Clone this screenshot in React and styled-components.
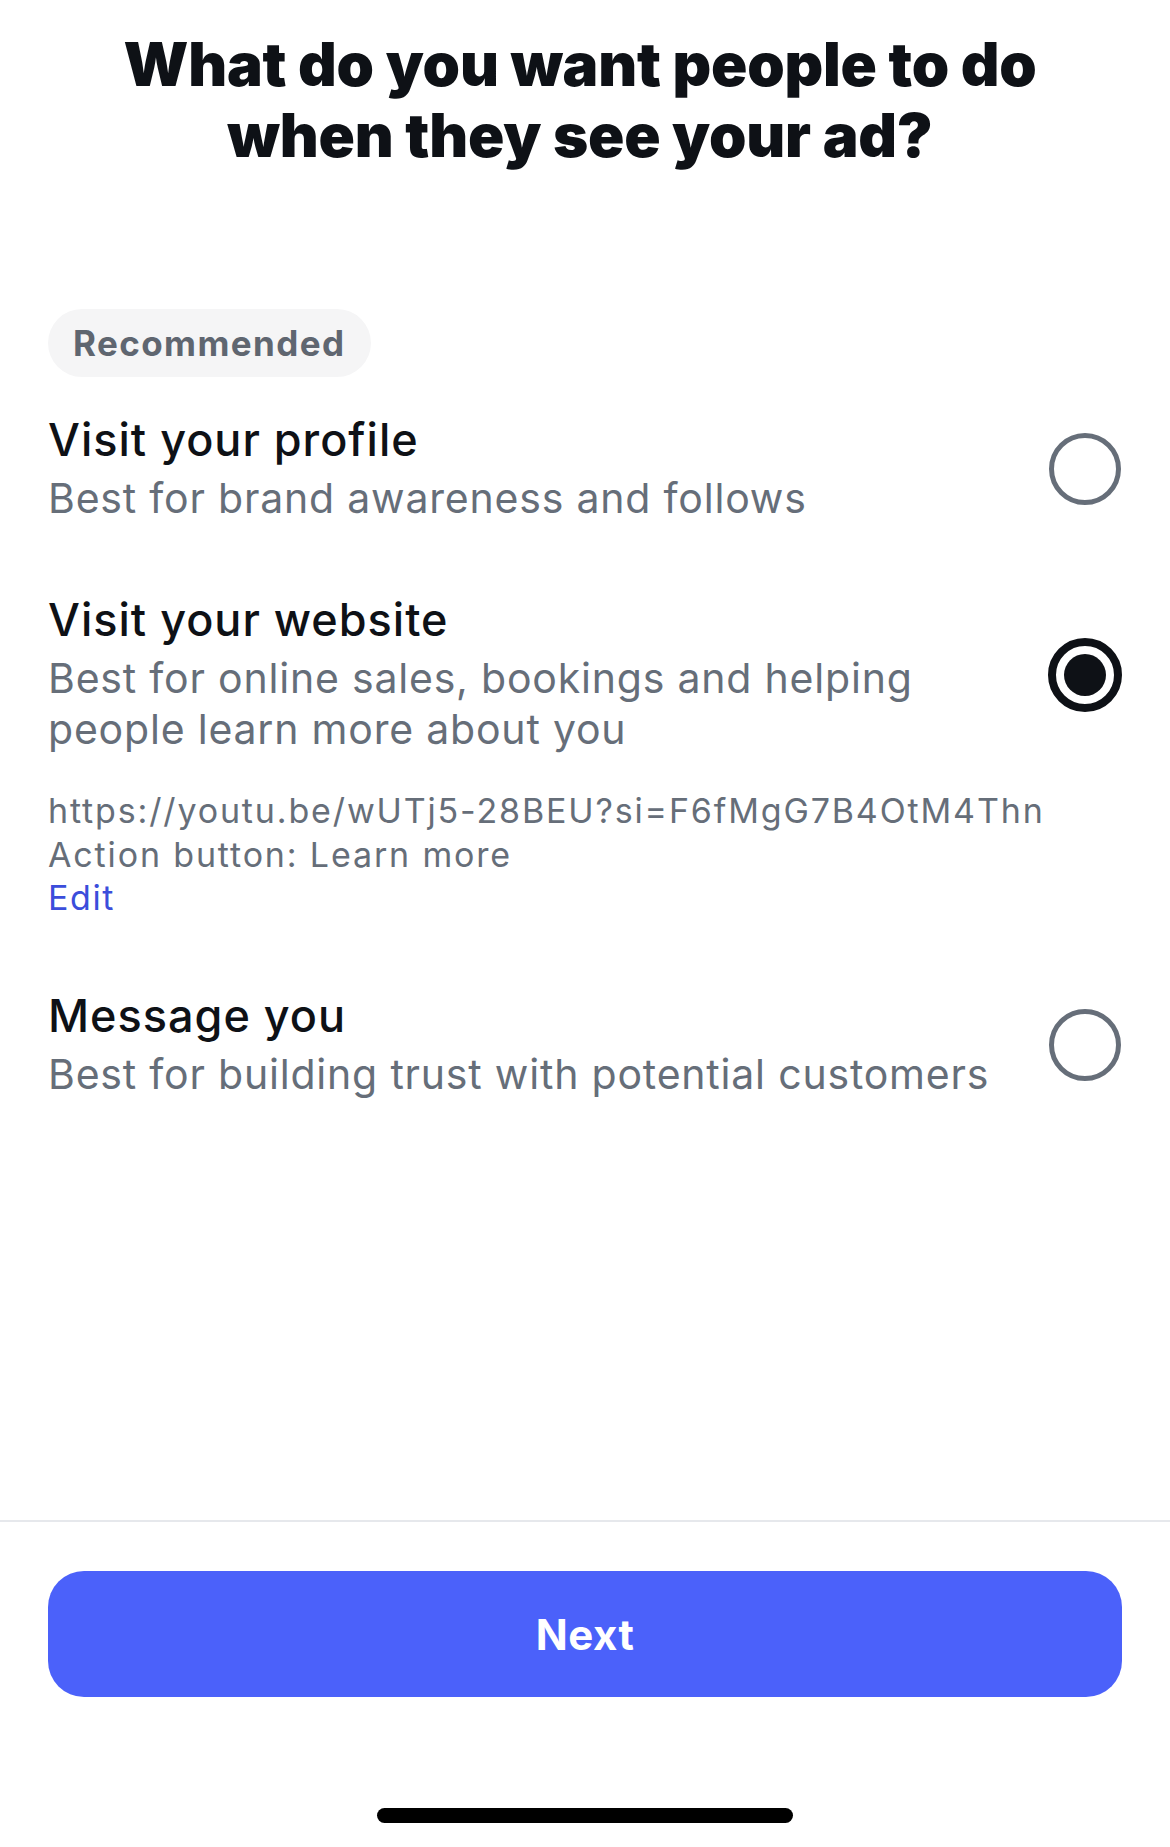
import React, { useState } from "react";
import styled, { createGlobalStyle } from "styled-components";

const GlobalStyle = createGlobalStyle`
  html, body {
    margin: 0;
    padding: 0;
    background: #ffffff;
  }
  body {
    font-family: Inter, "Noto Sans", "Liberation Sans", sans-serif;
    -webkit-font-smoothing: antialiased;
  }
`;

const options = [
  {
    id: "profile",
    title: "Visit your profile",
    desc: "Best for brand awareness and follows",
  },
  {
    id: "website",
    title: "Visit your website",
    desc: "Best for online sales, bookings and helping people learn more about you",
    details: {
      url: "https://youtu.be/wUTj5-28BEU?si=F6fMgG7B4OtM4Thn",
      action: "Action button: Learn more",
    },
  },
  {
    id: "message",
    title: "Message you",
    desc: "Best for building trust with potential customers",
  },
];

const App = () => {
  const [selected, setSelected] = useState("website");

  return (
    <Page>
      <GlobalStyle />
      <Heading>
        What do you want people to do
        <br />
        when they see your ad?
      </Heading>

      <Content>
        <Pill>Recommended</Pill>
        {options.map((opt) => (
          <Option key={opt.id}>
            <OptionRow onClick={() => setSelected(opt.id)}>
              <OptionText>
                <OptionTitle>{opt.title}</OptionTitle>
                <OptionDesc>{opt.desc}</OptionDesc>
              </OptionText>
              <Radio $checked={selected === opt.id} />
            </OptionRow>
            {opt.details && (
              <Details>
                <DetailLine>{opt.details.url}</DetailLine>
                <DetailLine>{opt.details.action}</DetailLine>
                <EditLink>Edit</EditLink>
              </Details>
            )}
          </Option>
        ))}
      </Content>

      <Footer>
        <NextButton>Next</NextButton>
        <HomeBar />
      </Footer>
    </Page>
  );
};

export default App;

const Page = styled.div`
  width: 1170px;
  height: 1847px;
  display: flex;
  flex-direction: column;
  background: #fff;
  overflow: hidden;
`;

const Heading = styled.h1`
  margin: 0;
  padding: 29px 10px 0 0;
  font-size: 60px;
  line-height: 71px;
  font-weight: 900;
  letter-spacing: -0.2px;
  color: #0e1116;
  text-align: center;
`;

const Content = styled.div`
  flex: 1;
  display: flex;
  flex-direction: column;
  align-items: flex-start;
  padding: 0 48px;
  margin-top: 138px;
`;

const Pill = styled.div`
  height: 68px;
  display: flex;
  align-items: center;
  padding: 0 26px 0 25px;
  border-radius: 34px;
  background: #f5f5f6;
  color: #5f6670;
  font-size: 35px;
  font-weight: 700;
  letter-spacing: 1.4px;
`;

const Option = styled.div`
  width: 100%;
  margin-top: 37px;
  & + & {
    margin-top: 70px;
  }
`;

const OptionRow = styled.div`
  display: flex;
  align-items: center;
  justify-content: space-between;
  cursor: pointer;
`;

const OptionText = styled.div`
  display: flex;
  flex-direction: column;
  gap: 7px;
  max-width: 980px;
`;

const OptionTitle = styled.div`
  font-size: 45px;
  line-height: 52px;
  font-weight: 500;
  color: #0e1116;
  letter-spacing: 1px;
`;

const OptionDesc = styled.div`
  font-size: 41px;
  line-height: 51px;
  color: #666e79;
  letter-spacing: 0.8px;
`;

const Radio = styled.div`
  flex-shrink: 0;
  box-sizing: border-box;
  width: ${(p) => (p.$checked ? "74px" : "72px")};
  height: ${(p) => (p.$checked ? "74px" : "72px")};
  border-radius: 50%;
  border: ${(p) => (p.$checked ? "8px solid #0e1116" : "5px solid #666e79")};
  margin-right: ${(p) => (p.$checked ? "0" : "1px")};
  display: flex;
  align-items: center;
  justify-content: center;

  &::after {
    content: "";
    display: ${(p) => (p.$checked ? "block" : "none")};
    width: 42px;
    height: 42px;
    border-radius: 50%;
    background: #0e1116;
  }
`;

const Details = styled.div`
  margin-top: 34px;
  display: flex;
  flex-direction: column;
`;

const DetailLine = styled.div`
  font-size: 34px;
  line-height: 43.5px;
  color: #666e79;
  letter-spacing: 1.85px;
`;

const EditLink = styled.a`
  font-size: 34px;
  line-height: 43.5px;
  color: #3b4ddb;
  letter-spacing: 1.6px;
  cursor: pointer;
  align-self: flex-start;
`;

const Footer = styled.div`
  border-top: 2px solid #e6e8ec;
  display: flex;
  flex-direction: column;
  align-items: center;
  padding: 49px 48px 24px;
`;

const NextButton = styled.button`
  width: 100%;
  height: 126px;
  border: none;
  border-radius: 36px;
  background: #4b61fa;
  color: #fff;
  font-family: inherit;
  font-size: 42px;
  font-weight: 700;
  letter-spacing: 0.5px;
  cursor: pointer;
`;

const HomeBar = styled.div`
  margin-top: 111px;
  width: 416px;
  height: 15px;
  border-radius: 8px;
  background: #000;
`;
